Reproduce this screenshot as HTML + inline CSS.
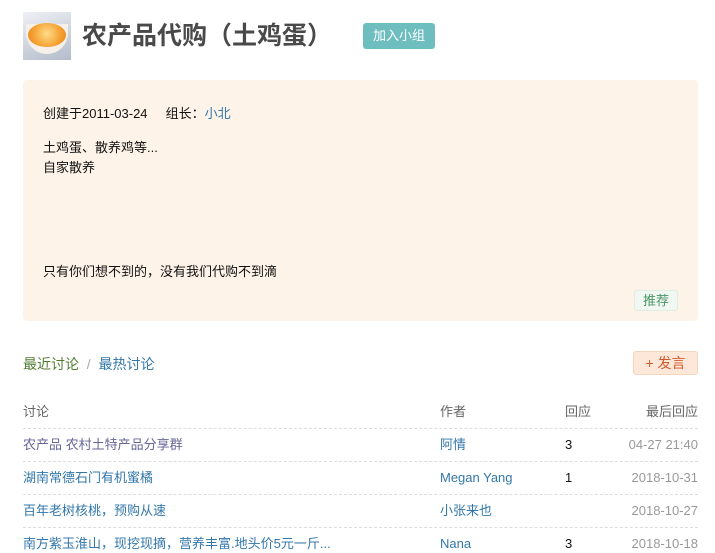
<!DOCTYPE html>
<html><head><meta charset="utf-8"><style>
*{margin:0;padding:0;box-sizing:border-box}
body{width:715px;height:552px;background:#fff;font-family:"Liberation Sans","Noto Sans CJK SC",sans-serif;font-size:13px;color:#111;position:relative;overflow:hidden}
.a{position:absolute;white-space:nowrap}
.l{color:#37a}
.v{color:#669}
.g{color:#999}
.hr{position:absolute;left:23px;width:675px;border-top:1px dashed #ddd;height:0}
</style></head><body>
<div class="a" style="left:23px;top:12px;width:48px;height:48px;background:linear-gradient(160deg,#eef0f4,#b4bccb);overflow:hidden">
 <div style="position:absolute;left:3px;top:12px;width:42px;height:30px;border-radius:0 0 22px 22px/0 0 22px 22px;background:#f6f0ea"></div>
 <div style="position:absolute;left:5px;top:11px;width:38px;height:24px;border-radius:50%;background:radial-gradient(circle at 50% 45%,#ffdc8a,#f5a030 60%,#e48218)"></div>
</div>
<div class="a" style="left:82px;top:18px;font-size:25px;font-weight:bold;color:#494949;line-height:36px">农产品代购（土鸡蛋）</div>
<div class="a" style="left:363px;top:23px;width:72px;height:26px;background:#6ebec0;border-radius:3px;color:#fff;font-size:13px;line-height:26px;text-align:center">加入小组</div>
<div class="a" style="left:23px;top:80px;width:675px;height:241px;background:#fdf3e8;border-radius:4px"></div>
<div class="a" style="left:43px;top:105px;line-height:18px">创建于2011-03-24 &nbsp;&nbsp;&nbsp; 组长：<span class="l">小北</span></div>
<div class="a" style="left:43px;top:138px;line-height:20px">土鸡蛋、散养鸡等...<br>自家散养</div>
<div class="a" style="left:43px;top:263px;line-height:18px">只有你们想不到的，没有我们代购不到滴</div>
<div class="a" style="left:634px;top:290px;width:44px;height:21px;background:#f1f8f1;border:1px solid #dfeee0;border-radius:3px;color:#4a9466;line-height:19px;text-align:center">推荐</div>
<div class="a" style="left:23px;top:354px;font-size:14px;line-height:20px"><span style="color:#507c30">最近讨论</span> <span style="color:#aaa">&nbsp;/&nbsp;</span> <span class="l">最热讨论</span></div>
<div class="a" style="left:633px;top:351px;width:65px;height:24px;background:#fce7d8;border:1px solid #f6d5bd;border-radius:3px;color:#d05a2c;font-size:14px;line-height:22px;text-align:center">+ 发言</div>
<div class="a" style="left:23px;top:403px;color:#666;line-height:18px">讨论</div>
<div class="a" style="left:440px;top:403px;color:#666;line-height:18px">作者</div>
<div class="a" style="left:565px;top:403px;color:#666;line-height:18px">回应</div>
<div class="a" style="right:17px;top:403px;color:#666;line-height:18px">最后回应</div>
<div class="hr" style="top:428px"></div>
<div class="a v" style="left:23px;top:436px;line-height:18px">农产品 农村土特产品分享群</div>
<div class="a l" style="left:440px;top:436px;line-height:18px">阿情</div>
<div class="a" style="left:565px;top:436px;line-height:18px">3</div>
<div class="a g" style="right:17px;top:436px;line-height:18px">04-27 21:40</div>
<div class="hr" style="top:461px"></div>
<div class="a l" style="left:23px;top:469px;line-height:18px">湖南常德石门有机蜜橘</div>
<div class="a l" style="left:440px;top:469px;line-height:18px">Megan Yang</div>
<div class="a" style="left:565px;top:469px;line-height:18px">1</div>
<div class="a g" style="right:17px;top:469px;line-height:18px">2018-10-31</div>
<div class="hr" style="top:494px"></div>
<div class="a l" style="left:23px;top:502px;line-height:18px">百年老树核桃，预购从速</div>
<div class="a l" style="left:440px;top:502px;line-height:18px">小张来也</div>
<div class="a g" style="right:17px;top:502px;line-height:18px">2018-10-27</div>
<div class="hr" style="top:527px"></div>
<div class="a l" style="left:23px;top:535px;line-height:18px">南方紫玉淮山，现挖现摘，营养丰富.地头价5元一斤...</div>
<div class="a l" style="left:440px;top:535px;line-height:18px">Nana</div>
<div class="a" style="left:565px;top:535px;line-height:18px">3</div>
<div class="a g" style="right:17px;top:535px;line-height:18px">2018-10-18</div>
</body></html>
